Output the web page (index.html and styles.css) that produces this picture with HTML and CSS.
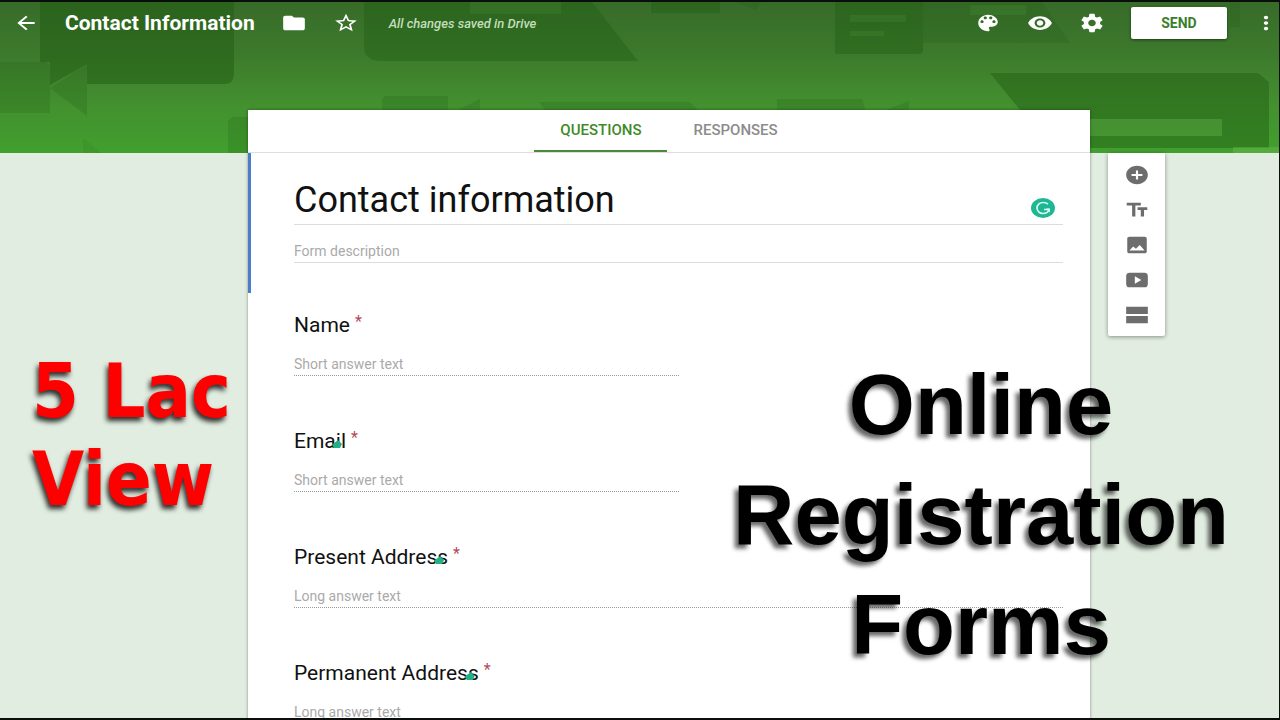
FILE: index.html
```html
<!DOCTYPE html>
<html lang="en">
  <head>
    <meta charset="UTF-8" />
    <meta name="viewport" content="width=device-width, initial-scale=1.0" />
    <title>Contact Information</title>
    <link rel="stylesheet" href="styles.css" />
  </head>
  <body>
    <div class="app">
      <header class="header">
        <svg class="header-art" viewBox="0 0 1279 151" preserveAspectRatio="none" aria-hidden="true">
          <g fill="#1f5c12" fill-opacity="0.5">
            <path d="M40 0H234V72Q234 82 224 82H87V62L50 83V60H40Z" />
            <path d="M364 0H592L638 59H378Q364 57 364 45Z" fill-opacity="0.4" />
            <path d="M835 0H923V48Q923 52 919 52H835Z" fill-opacity="0.4" />
            <path d="M990 71H1258L1269 80V146H1051Z" fill-opacity="0.45" />
          </g>
          <g fill="#1f5c12" fill-opacity="0.2">
            <path d="M0 60H46L50 64V111H0Z" />
            <path d="M50 86L87 62V114Z" />
            <path d="M83 136L101 151H83Z" fill-opacity="0.1" />
            <path d="M232 115H248V151H228V119Z" />
            <path d="M385 94H448V110H382V97Z" />
            <path d="M458 108L480 97V110H458Z" />
            <path d="M539 100H690L700 110H546Z" />
            <path d="M651 0H720V11H651Z" fill-opacity="0.4" />
            <path d="M735 0H761L756 8Z" />
            <path d="M923 0H1042L1070 41H923Z" />
            <path d="M777 97H862L866 110H777Z" />
            <path d="M886 108L909 99V110H886Z" />
            <path d="M1230 0H1240V25H1230Z" />
          </g>
          <g fill="#6dbd52" fill-opacity="0.12">
            <path d="M470 0H561V12H470Z" />
            <path d="M850 13H906V20H850Z" />
            <path d="M850 29H884V34H850Z" />
            <path d="M970 3H1026V13H970Z" />
            <path d="M1090 117H1222V134H1090Z" fill-opacity="0.35" />
            <path d="M1233 145H1279V151H1233Z" fill-opacity="0.4" />
          </g>
        </svg>

        <nav class="toolbar">
          <button class="icon-button" aria-label="Back">
            <svg class="icon" viewBox="0 0 24 24" preserveAspectRatio="none"><path d="M20 11H7.8l5.6-5.6L12 4l-8 8 8 8 1.4-1.4L7.8 13H20z" /></svg>
          </button>
          <span class="doc-name">Contact Information</span>
          <button class="icon-button" aria-label="Move to folder">
            <svg class="icon" viewBox="0 0 24 24" preserveAspectRatio="none"><path d="M10 4H4c-1.100 0-2 .9-2 2v12c0 1.100.9 2 2 2h16c1.100 0 2-.9 2-2V8c0-1.100-.9-2-2-2h-8z" /></svg>
          </button>
          <button class="icon-button" aria-label="Star">
            <svg class="icon" viewBox="0 0 24 24" preserveAspectRatio="none"><path d="M22 9.240l-7.190-.62L12 2 9.190 8.630 2 9.240l5.460 4.730L5.820 21 12 17.270 18.180 21l-1.630-7.030zM12 15.400l-3.760 2.270 1-4.280-3.320-2.880 4.380-.38L12 6.100l1.710 4.040 4.380.38-3.320 2.880 1 4.280z" /></svg>
          </button>
          <span class="save-status">All changes saved in Drive</span>
          <div class="toolbar-actions">
            <button class="icon-button" aria-label="Color palette">
              <svg class="icon" viewBox="0 0 24 24" preserveAspectRatio="none"><path d="M12 3c-4.970 0-9 4.030-9 9s4.030 9 9 9c.83 0 1.500-.67 1.500-1.500 0-.39-.15-.74-.39-1.010-.23-.26-.38-.61-.38-.99 0-.83.67-1.500 1.500-1.500H16c2.760 0 5-2.240 5-5 0-4.420-4.030-8-9-8zm-5.500 9c-.83 0-1.500-.67-1.500-1.500S5.670 9 6.500 9 8 9.670 8 10.500 7.330 12 6.500 12zm3-4C8.670 8 8 7.330 8 6.500S8.670 5 9.500 5s1.500.67 1.500 1.500S10.330 8 9.500 8zm5 0c-.83 0-1.500-.67-1.500-1.500S13.670 5 14.500 5s1.500.67 1.500 1.500S15.330 8 14.500 8zm3 4c-.83 0-1.500-.67-1.500-1.500S16.670 9 17.500 9s1.500.67 1.500 1.500-.67 1.500-1.500 1.500z" /></svg>
            </button>
            <button class="icon-button" aria-label="Preview">
              <svg class="icon" viewBox="0 0 24 24" preserveAspectRatio="none"><path d="M12 4.500C7 4.500 2.730 7.610 1 12c1.730 4.390 6 7.500 11 7.500s9.270-3.110 11-7.500c-1.730-4.390-6-7.500-11-7.500zM12 17c-2.760 0-5-2.240-5-5s2.240-5 5-5 5 2.240 5 5-2.240 5-5 5zm0-8c-1.660 0-3 1.340-3 3s1.340 3 3 3 3-1.340 3-3-1.340-3-3-3z" /></svg>
            </button>
            <button class="icon-button" aria-label="Settings">
              <svg class="icon" viewBox="0 0 24 24" preserveAspectRatio="none"><path d="M19.430 12.980c.04-.32.07-.64.07-.98s-.03-.66-.07-.98l2.110-1.650c.19-.15.24-.42.12-.64l-2-3.460c-.12-.22-.39-.3-.61-.22l-2.490 1c-.52-.4-1.080-.73-1.690-.98l-.38-2.650C14.460 2.180 14.250 2 14 2h-4c-.25 0-.46.18-.49.42l-.38 2.650c-.61.25-1.170.59-1.690.98l-2.490-1c-.23-.09-.49 0-.61.22l-2 3.460c-.13.22-.07.49.12.64l2.110 1.650c-.04.32-.07.65-.07.98s.03.66.07.98l-2.110 1.650c-.19.15-.24.42-.12.64l2 3.460c.12.22.39.3.61.22l2.490-1c.52.4 1.080.73 1.690.98l.38 2.650c.03.24.24.42.49.42h4c.25 0 .46-.18.49-.42l.38-2.650c.61-.25 1.170-.59 1.690-.98l2.490 1c.23.09.49 0 .61-.22l2-3.460c.12-.22.07-.49-.12-.64zM12 15.500c-1.930 0-3.500-1.570-3.500-3.500s1.570-3.500 3.500-3.500 3.500 1.570 3.500 3.500-1.570 3.500-3.500 3.500z" /></svg>
            </button>
            <button class="send-button">SEND</button>
            <button class="icon-button" aria-label="More">
              <svg class="icon" viewBox="0 0 24 24" preserveAspectRatio="none"><path d="M12 8c1.100 0 2-.9 2-2s-.9-2-2-2-2 .9-2 2 .9 2 2 2zm0 2c-1.100 0-2 .9-2 2s.9 2 2 2 2-.9 2-2-.9-2-2-2zm0 6c-1.100 0-2 .9-2 2s.9 2 2 2 2-.9 2-2-.9-2-2-2z" /></svg>
            </button>
          </div>
        </nav>
      </header>

      <main class="workspace">
        <form class="form-card">
          <div class="tabs" role="tablist">
            <button type="button" class="tab active" role="tab" aria-selected="true">QUESTIONS</button>
            <button type="button" class="tab" role="tab" aria-selected="false">RESPONSES</button>
          </div>

          <section class="form-intro">
            <input class="field form-title" type="text" value="Contact information" aria-label="Form title" />
            <input class="field form-description" type="text" placeholder="Form description" aria-label="Form description" />
            <svg class="checker-badge" viewBox="0 0 24 20" preserveAspectRatio="none" aria-hidden="true">
              <ellipse cx="12" cy="10" rx="12" ry="10" fill="#1fb793" />
              <path d="M17 6Q15 4.500 12 4.500C8.500 4.500 6 7 6 10s2.500 5.500 6 5.500 5.500-2 5.800-4H13" fill="none" stroke="#d9fff4" stroke-width="1.600" />
              <path d="M15 10.500h4v4z" fill="#d9fff4" />
            </svg>
          </section>

          <section class="question">
            <div class="question-head">
              <label for="name">Name</label><span class="required">*</span>
            </div>
            <input class="field answer short" id="name" type="text" placeholder="Short answer text" />
          </section>

          <section class="question">
            <div class="question-head">
              <label class="checked" for="email">Email</label><span class="required">*</span>
            </div>
            <input class="field answer short" id="email" type="text" placeholder="Short answer text" />
          </section>

          <section class="question">
            <div class="question-head">
              <label class="checked" for="present-address">Present Address</label><span class="required">*</span>
            </div>
            <input class="field answer" id="present-address" type="text" placeholder="Long answer text" />
          </section>

          <section class="question">
            <div class="question-head">
              <label class="checked" for="permanent-address">Permanent Address</label><span class="required">*</span>
            </div>
            <input class="field answer" id="permanent-address" type="text" placeholder="Long answer text" />
          </section>
        </form>

        <aside class="side-tools">
          <button class="tool-button" aria-label="Add question">
            <svg class="icon" viewBox="0 0 24 24" preserveAspectRatio="none"><path d="M12 2C6.480 2 2 6.480 2 12s4.480 10 10 10 10-4.480 10-10S17.520 2 12 2zm5 11h-4v4h-2v-4H7v-2h4V7h2v4h4z" /></svg>
          </button>
          <button class="tool-button" aria-label="Add title and description">
            <svg class="icon" viewBox="0 0 24 24" preserveAspectRatio="none"><path d="M2.500 4v3h5v12h3V7h5V4zm19 5h-9v3h3v7h3v-7h3z" /></svg>
          </button>
          <button class="tool-button" aria-label="Add image">
            <svg class="icon" viewBox="0 0 24 24" preserveAspectRatio="none"><path d="M21 19V5c0-1.100-.9-2-2-2H5c-1.100 0-2 .9-2 2v14c0 1.100.9 2 2 2h14c1.100 0 2-.9 2-2zM5 18l3.500-4.500 2.500 2.500L14.500 12l4.500 6z" /></svg>
          </button>
          <button class="tool-button" aria-label="Add video">
            <svg class="icon" viewBox="0 0 24 24" preserveAspectRatio="none"><path d="M5 4Q2 4 2 8v8q0 4 3 4h14q3 0 3-4V8q0-4-3-4zm5 4l6 4-6 4z" /></svg>
          </button>
          <button class="tool-button" aria-label="Add section">
            <svg class="icon" viewBox="0 0 24 24" preserveAspectRatio="none"><path d="M2 3h20v8H2zM2 13h20v8H2z" /></svg>
          </button>
        </aside>
      </main>

      <p class="caption caption-views">5 Lac<br />View</p>
      <p class="caption caption-title">Online<br />Registration<br />Forms</p>
    </div>
  </body>
</html>
```
FILE: styles.css
```css
* {
  box-sizing: border-box;
  margin: 0;
  padding: 0;
}

body {
  font-family: Roboto, "Liberation Sans", sans-serif;
  background-color: #e1ede0;
  color: #111;
}

button {
  border: none;
  background: none;
  font-family: inherit;
  cursor: pointer;
}

.app {
  position: relative;
  height: 100vh;
  overflow: hidden;
  border: solid #0b0f0b;
  border-width: 2px 1px 2px 0;
}

/* Header */
.header {
  position: relative;
  height: 151px;
  background: linear-gradient(#376b29 0%, #3d7a2c 35%, #43902f 68%, #41a02e 100%);
}

.header-art {
  position: absolute;
  top: 0;
  left: 0;
  width: 100%;
  height: 100%;
}

.toolbar {
  position: relative;
  display: flex;
  align-items: center;
  gap: 26px;
  height: 42px;
  padding-left: 13px;
  color: #fff;
}

.toolbar-actions {
  display: flex;
  align-items: center;
  gap: 26px;
  margin-left: auto;
}

.icon {
  display: block;
  width: 26px;
  height: 22px;
  fill: currentColor;
}

.icon-button {
  color: #fff;
}

.doc-name {
  font-size: 21px;
  font-weight: 700;
}

.save-status {
  margin-left: 4px;
  font-size: 13px;
  font-style: italic;
  font-weight: 500;
  color: #c3dfbb;
}

.send-button {
  width: 96px;
  height: 32px;
  border-radius: 2px;
  background-color: #fff;
  box-shadow: 0 1px 3px rgba(0, 0, 0, 0.5);
  color: #39802b;
  font-size: 14px;
  font-weight: 700;
}

/* Workspace */
.workspace {
  position: relative;
  display: flex;
  align-items: flex-start;
  gap: 18px;
  margin-top: -43px;
  padding: 0 114px 0 248px;
}

.form-card {
  flex: 1;
  background-color: #fff;
  box-shadow: 0 0 3px rgba(0, 0, 0, 0.4);
}

.tabs {
  display: flex;
  justify-content: center;
  height: 43px;
  border-bottom: 1px solid #dedede;
}

.tab {
  padding: 0 26px;
  border-bottom: 2px solid transparent;
  color: #8c8c8c;
  font-size: 15px;
  font-weight: 500;
}

.tab.active {
  border-color: #4b8a38;
  color: #3f8a2b;
}

/* Form */
.field {
  display: block;
  width: 100%;
  border: none;
  border-bottom: 1px solid #dcdcdc;
  background: none;
  color: #111;
  font-family: inherit;
  font-size: 14px;
  outline: none;
}

.field::placeholder {
  color: #aaa;
  opacity: 1;
}

.form-intro {
  position: relative;
  height: 140px;
  padding: 22px 27px 0 43px;
  border-left: 3px solid #4a7fc8;
}

.form-title {
  height: 50px;
  font-size: 36px;
}

.form-description {
  height: 23px;
  margin-top: 15px;
}

.checker-badge {
  position: absolute;
  top: 45px;
  right: 35px;
  width: 24px;
  height: 20px;
}

.question {
  padding: 20px 27px 33px 46px;
}

.question-head {
  display: flex;
  align-items: flex-start;
  gap: 5px;
}

.question label {
  position: relative;
  font-size: 21px;
  line-height: 24px;
}

.checked::after {
  content: "";
  position: absolute;
  right: 4px;
  bottom: 5px;
  width: 10px;
  height: 8px;
  background-color: #22b08a;
  clip-path: polygon(0 60%, 60% 0, 100% 50%, 80% 100%, 20% 100%);
}

.required {
  color: #b5485a;
  font-size: 16px;
  line-height: 18px;
}

.answer {
  height: 23px;
  margin-top: 16px;
  border-bottom: 1px dotted #999;
}

.answer.short {
  width: 50%;
}

/* Side tools */
.side-tools {
  display: flex;
  flex-direction: column;
  width: 57px;
  margin-top: 43px;
  padding: 4px 0;
  border-radius: 0 0 2px 2px;
  background-color: #fff;
  box-shadow: 0 1px 4px rgba(0, 0, 0, 0.4);
}

.tool-button {
  display: flex;
  align-items: center;
  justify-content: center;
  height: 35px;
  color: #6d6d6d;
}

/* Captions */
.caption {
  position: absolute;
  font-weight: 700;
  pointer-events: none;
}

.caption-views {
  top: 345px;
  left: 32px;
  color: #f00;
  font-family: "DejaVu Sans Condensed", "DejaVu Sans", sans-serif;
  font-size: 75px;
  line-height: 88px;
  text-shadow: -2px 4px 5px rgba(0, 0, 0, 0.8);
}

.caption-title {
  top: 348px;
  right: 50px;
  color: #000;
  font-family: "Liberation Sans", Arial, sans-serif;
  font-size: 85px;
  line-height: 110px;
  text-align: center;
  text-shadow: -4px 4px 4px rgba(0, 0, 0, 0.6);
}
```
